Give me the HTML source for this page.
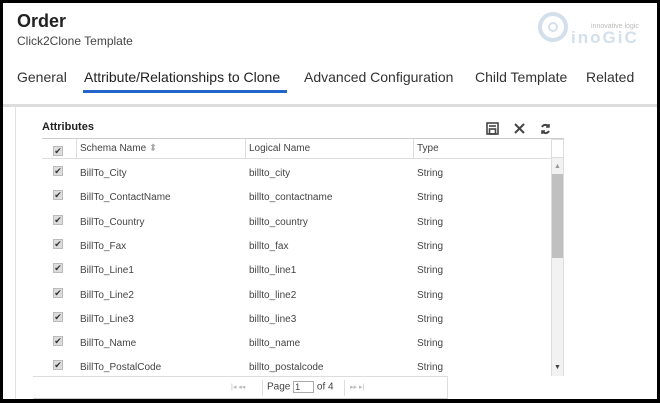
<!DOCTYPE html>
<html><head><style>
*{margin:0;padding:0;box-sizing:border-box}
body{width:660px;height:403px;background:#000;position:relative;overflow:hidden;font-family:"Liberation Sans",sans-serif}
#page{position:absolute;left:3px;top:3px;width:654px;height:396px;background:#fff;overflow:hidden}
.abs{position:absolute;white-space:nowrap}
h1{position:absolute;left:14px;top:8px;font-size:18px;font-weight:bold;color:#222}
.sub{left:14px;top:31px;font-size:12px;color:#444}
.tab{top:66px;font-size:14px;color:#333}
.hl{position:absolute;left:0;top:101px;width:654px;height:3px;background:#ddd}
.vl{position:absolute;left:12px;top:104px;width:1px;height:300px;background:#e2e2e2}
.t{font-size:10px;color:#444}
.cb{position:absolute;width:10px;height:10px;background:#ddd;border:1px solid #bbb;font-size:9px;line-height:8px;text-align:center;color:#333}
</style></head><body><div id="page">
<h1>Order</h1>
<div class="abs sub">Click2Clone Template</div>
<div class="abs tab" style="left:14px">General</div>
<div class="abs tab" style="left:81px;color:#222">Attribute/Relationships to Clone</div>
<div style="position:absolute;left:80px;top:87px;width:204px;height:3px;background:#2266cc"></div>
<div class="abs tab" style="left:301px">Advanced Configuration</div>
<div class="abs tab" style="left:472px">Child Template</div>
<div class="abs tab" style="left:583px">Related</div>
<div style="position:absolute;left:535px;top:9px;width:30px;height:30px;border-radius:50%;border:4px solid #d3dfea"></div>
<div style="position:absolute;left:545px;top:19px;width:10px;height:10px;border-radius:50%;border:2px solid #d3dfea"></div>
<div class="abs" style="left:588px;top:20px;font-size:7px;color:#bbb">innovative logic</div>
<div class="abs" style="left:568px;top:25px;font-size:17px;color:#d3dfea;letter-spacing:2px;font-weight:bold">inoGiC</div>
<div class="hl"></div><div class="vl"></div>
<div class="abs" style="left:39px;top:118px;font-size:11px;font-weight:bold;color:#222">Attributes</div>
<svg class="abs" style="left:483px;top:119px" width="70" height="14" viewBox="0 0 70 14" fill="none" stroke="#444" stroke-width="1.6">
<rect x="1" y="1" width="11" height="11"/><rect x="3.5" y="7" width="6" height="5"/><line x1="3" y1="4" x2="10" y2="4"/>
<path d="M29 2l9 9M38 2l-9 9" stroke-width="2"/>
<path d="M56 5a4 4 0 0 1 7 0M63 9a4 4 0 0 1 -7 0" stroke-width="2"/><path d="M63 2v3h-3M56 12v-3h3" stroke-width="1.5"/>
</svg>
<div style="position:absolute;left:39px;top:135px;width:522px;height:237px;border-top:1px solid #ccc"></div>
<div style="position:absolute;left:39px;top:155px;width:509px;height:1px;background:#ddd"></div>
<div style="position:absolute;left:73px;top:136px;width:1px;height:19px;background:#ddd"></div>
<div style="position:absolute;left:242px;top:136px;width:1px;height:19px;background:#ddd"></div>
<div style="position:absolute;left:410px;top:136px;width:1px;height:19px;background:#ddd"></div>
<div style="position:absolute;left:548px;top:136px;width:13px;height:237px;border-left:1px solid #ddd;border-right:1px solid #ddd;background:#f2f2f2"></div>
<div style="position:absolute;left:548px;top:136px;width:13px;height:19px;background:#fff;border:1px solid #ddd"></div>
<div style="position:absolute;left:549px;top:171px;width:11px;height:84px;background:#c0c0c0"></div>
<div class="abs" style="left:551px;top:160px;font-size:7px;color:#999">▲</div>
<div class="abs" style="left:551px;top:361px;font-size:7px;color:#444">▼</div>
<div class="cb" style="left:50px;top:143px">✔</div>
<div class="abs t" style="left:77px;top:140px">Schema Name <span style="color:#aaa">⬍</span></div>
<div class="abs t" style="left:246px;top:140px">Logical Name</div>
<div class="abs t" style="left:414px;top:140px">Type</div>
<div id="rows"></div>
<div style="position:absolute;left:30px;top:373px;width:415px;height:23px;border-top:1px solid #ddd;border-bottom:1px solid #ccc;border-right:1px solid #ddd"></div>
<div class="abs" style="left:228px;top:380px;font-size:7px;color:#bbb">|◂ ◂◂</div>
<div style="position:absolute;left:259px;top:377px;width:1px;height:16px;background:#ddd"></div>
<div class="abs t" style="left:264px;top:378px">Page <span style="display:inline-block;width:21px;height:12px;border:1px solid #aaa;vertical-align:middle;font-size:9px;line-height:10px;padding-left:1px">1</span> of 4</div>
<div style="position:absolute;left:341px;top:377px;width:1px;height:16px;background:#ddd"></div>
<div class="abs" style="left:347px;top:380px;font-size:7px;color:#bbb">▸▸ ▸|</div>
</div>
<script>
var d=[["BillTo_City","billto_city"],["BillTo_ContactName","billto_contactname"],["BillTo_Country","billto_country"],["BillTo_Fax","billto_fax"],["BillTo_Line1","billto_line1"],["BillTo_Line2","billto_line2"],["BillTo_Line3","billto_line3"],["BillTo_Name","billto_name"],["BillTo_PostalCode","billto_postalcode"]];
var h="";d.forEach(function(r,i){var y=165+i*24.3;
h+='<div class="cb" style="left:50px;top:'+(y-2)+'px">✔</div><div class="abs t" style="left:77px;top:'+y+'px">'+r[0]+'</div><div class="abs t" style="left:246px;top:'+y+'px">'+r[1]+'</div><div class="abs t" style="left:414px;top:'+y+'px">String</div>';});
document.getElementById("rows").outerHTML=h;
</script>
</body></html>
